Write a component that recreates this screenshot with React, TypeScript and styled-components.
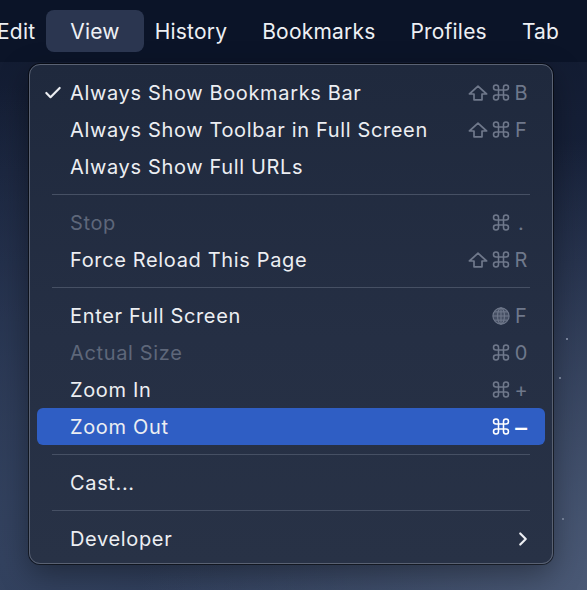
import styled, { createGlobalStyle } from 'styled-components'
import { Command, ChevronRight, Check } from 'lucide-react'
import { ReactNode } from 'react'

const GlobalStyle = createGlobalStyle`
  html, body {
    margin: 0;
    padding: 0;
    width: 587px;
    height: 590px;
    overflow: hidden;
  }
  body {
    font-family: Inter, 'Noto Sans', 'DejaVu Sans', sans-serif;
    -webkit-font-smoothing: antialiased;
  }
`

type Mod = 'shift' | 'cmd' | 'globe'

interface MenuEntry {
  label: string
  checked?: boolean
  disabled?: boolean
  active?: boolean
  mods?: Mod[]
  keyLabel?: string
  submenu?: boolean
}

type MenuSection = MenuEntry[]

const sections: MenuSection[] = [
  [
    { label: 'Always Show Bookmarks Bar', checked: true, mods: ['shift', 'cmd'], keyLabel: 'B' },
    { label: 'Always Show Toolbar in Full Screen', mods: ['shift', 'cmd'], keyLabel: 'F' },
    { label: 'Always Show Full URLs' },
  ],
  [
    { label: 'Stop', disabled: true, mods: ['cmd'], keyLabel: '.' },
    { label: 'Force Reload This Page', mods: ['shift', 'cmd'], keyLabel: 'R' },
  ],
  [
    { label: 'Enter Full Screen', mods: ['globe'], keyLabel: 'F' },
    { label: 'Actual Size', disabled: true, mods: ['cmd'], keyLabel: '0' },
    { label: 'Zoom In', mods: ['cmd'], keyLabel: '+' },
    { label: 'Zoom Out', active: true, mods: ['cmd'], keyLabel: '−' },
  ],
  [{ label: 'Cast...' }],
  [{ label: 'Developer', submenu: true }],
]

const barItems = ['Edit', 'View', 'History', 'Bookmarks', 'Profiles', 'Tab']

const ShiftGlyph = () => (
  <svg width="20" height="16" viewBox="0 0 20 16" fill="none" stroke="currentColor" strokeWidth="1.7" strokeLinejoin="round">
    <path d="M10 1.2 L1.4 9 H6 V14.8 H14 V9 H18.6 Z" />
  </svg>
)

const Globe = () => (
  <svg width="18" height="18" viewBox="0 0 20 20" fill="none" stroke="currentColor" strokeWidth="1.2">
    <circle cx="10" cy="10" r="9" fill="currentColor" fillOpacity="0.45" />
    <ellipse cx="10" cy="10" rx="3.8" ry="9" />
    <line x1="10" y1="1" x2="10" y2="19" />
    <line x1="1" y1="10" x2="19" y2="10" />
    <line x1="2.4" y1="5.4" x2="17.6" y2="5.4" />
    <line x1="2.4" y1="14.6" x2="17.6" y2="14.6" />
  </svg>
)

const modIcon = (mod: Mod): ReactNode => {
  if (mod === 'shift') return <ShiftGlyph />
  if (mod === 'cmd') return <Command size={23} strokeWidth={1.85} />
  return <Globe />
}

export default function App() {
  return (
    <Screen>
      <GlobalStyle />
      <MenuBar>
        {barItems.map((item) => (
          <BarItem key={item} $active={item === 'View'}>
            <span>{item}</span>
          </BarItem>
        ))}
      </MenuBar>
      <Menu>
        {sections.map((section, i) => (
          <Section key={i}>
            {i > 0 && <Separator />}
            {section.map((entry) => (
              <Row key={entry.label} $active={!!entry.active} $disabled={!!entry.disabled}>
                <CheckSlot>{entry.checked && <Check size={20} strokeWidth={2.6} />}</CheckSlot>
                <Label>{entry.label}</Label>
                {entry.mods && (
                  <Shortcut $active={!!entry.active}>
                    {entry.mods.map((m) => (
                      <ModSlot key={m} $width={m === 'shift' ? 24 : 20}>
                        {modIcon(m)}
                      </ModSlot>
                    ))}
                    <KeySlot $large={entry.keyLabel === '−'}>{entry.keyLabel}</KeySlot>
                  </Shortcut>
                )}
                {entry.submenu && (
                  <SubmenuArrow>
                    <ChevronRight size={22} strokeWidth={2.4} />
                  </SubmenuArrow>
                )}
              </Row>
            ))}
          </Section>
        ))}
      </Menu>
    </Screen>
  )
}

const Screen = styled.div`
  width: 587px;
  height: 590px;
  overflow: hidden;
  background:
    radial-gradient(circle at 498px 108px, rgba(200, 210, 230, 0.6) 0 1px, transparent 1.5px),
    radial-gradient(circle at 567px 339px, rgba(200, 210, 230, 0.5) 0 1px, transparent 1.5px),
    radial-gradient(circle at 560px 378px, rgba(200, 210, 230, 0.5) 0 1px, transparent 1.5px),
    radial-gradient(circle at 563px 519px, rgba(200, 210, 230, 0.4) 0 1px, transparent 1.5px),
    radial-gradient(ellipse at 620px 620px, #4d5c78 0%, rgba(77, 92, 120, 0) 55%),
    radial-gradient(ellipse at 0px 560px, #33425f 0%, rgba(51, 66, 95, 0) 60%),
    linear-gradient(180deg, #111a2f 0%, #1a253f 45%, #2c3a57 100%);
  display: flex;
  flex-direction: column;
`

const MenuBar = styled.div`
  height: 62px;
  background: #0b1428;
  display: flex;
  align-items: center;
  margin-left: -20.5px;
  flex-shrink: 0;
`

const BarItem = styled.div<{ $active: boolean }>`
  position: relative;
  height: 42px;
  padding: 0 17.5px;
  display: flex;
  align-items: center;
  font-size: 21px;
  letter-spacing: 0.2px;
  color: #eef0f4;
  white-space: nowrap;

  &::before {
    content: '';
    position: absolute;
    top: 0;
    bottom: 0;
    left: -6.5px;
    right: -6.5px;
    border-radius: 8px;
    background: ${({ $active }) => ($active ? '#2b3650' : 'transparent')};
  }

  span {
    position: relative;
  }
`

const Menu = styled.div`
  margin: 2px 0 0 29px;
  width: 524px;
  box-sizing: border-box;
  padding: 9px 7px 6px;
  border-radius: 11px;
  background: linear-gradient(180deg, #1f293d 0%, #252f44 55%, #283246 100%);
  border: 1px solid #5a6273;
  box-shadow: 0 0 0 1px rgba(0, 0, 0, 0.55), 0 10px 30px rgba(0, 0, 0, 0.35);
`

const Section = styled.div`
  display: flex;
  flex-direction: column;
`

const Separator = styled.div`
  height: 1px;
  margin: 9px 15px 9px;
  background: #465064;
`

const Row = styled.div<{ $active: boolean; $disabled: boolean }>`
  height: 37px;
  display: flex;
  align-items: center;
  padding: 0 15px 0 8px;
  border-radius: 6px;
  background: ${({ $active }) => ($active ? '#2f5ec4' : 'transparent')};
  color: ${({ $disabled }) => ($disabled ? '#5e677a' : '#eceef2')};
  font-size: 20px;
  letter-spacing: 0.65px;
`

const CheckSlot = styled.div`
  width: 25px;
  display: flex;
  align-items: center;
  justify-content: flex-start;
  margin-left: -2px;
  margin-right: 2px;
  color: #eceef2;
`

const Label = styled.div`
  flex: 1;
  white-space: nowrap;
`

const Shortcut = styled.div<{ $active: boolean }>`
  display: flex;
  align-items: center;
  gap: 1px;
  letter-spacing: 0;
  color: ${({ $active }) => ($active ? '#ffffff' : '#6f788b')};
`

const ModSlot = styled.div<{ $width: number }>`
  width: ${({ $width }) => $width}px;
  height: 24px;
  display: flex;
  align-items: center;
  justify-content: center;
`

const KeySlot = styled.div<{ $large: boolean }>`
  width: 18px;
  text-align: center;
  font-size: ${({ $large }) => ($large ? 26 : 20)}px;
  line-height: 24px;
`

const SubmenuArrow = styled.div`
  display: flex;
  align-items: center;
  margin-right: -4px;
  color: #eceef2;
`
